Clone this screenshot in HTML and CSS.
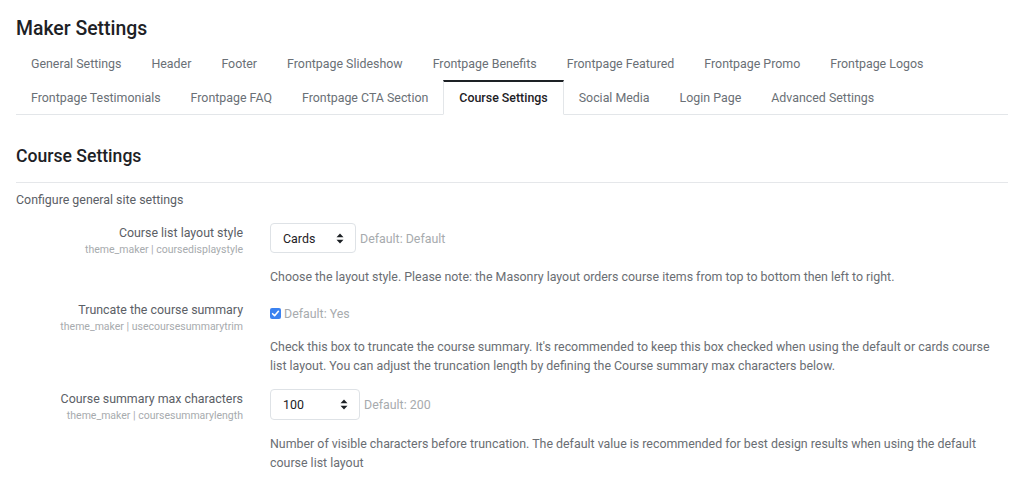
FILE: index.html
```html
<!DOCTYPE html>
<html lang="en">
<head>
<meta charset="utf-8">
<title>Maker Settings</title>
<link rel="stylesheet" href="styles.css">
</head>
<body>
<div class="page">
  <h2 class="page-title">Maker Settings</h2>
  <nav class="tabs">
    <a class="tab">General Settings</a>
    <a class="tab">Header</a>
    <a class="tab">Footer</a>
    <a class="tab">Frontpage Slideshow</a>
    <a class="tab">Frontpage Benefits</a>
    <a class="tab">Frontpage Featured</a>
    <a class="tab">Frontpage Promo</a>
    <a class="tab">Frontpage Logos</a>
    <a class="tab">Frontpage Testimonials</a>
    <a class="tab">Frontpage FAQ</a>
    <a class="tab">Frontpage CTA Section</a>
    <a class="tab active">Course Settings</a>
    <a class="tab">Social Media</a>
    <a class="tab">Login Page</a>
    <a class="tab">Advanced Settings</a>
  </nav>

  <h3 class="section-title">Course Settings</h3>
  <p class="intro">Configure general site settings</p>

  <div class="setting">
    <div class="label">
      <div class="label-name">Course list layout style</div>
      <div class="label-key">theme_maker | coursedisplaystyle</div>
    </div>
    <div class="control">
      <div class="control-line">
        <div class="select w86"><span>Cards</span>
          <svg class="caret" width="8" height="11" viewBox="0 0 8 11"><path d="M4 0.5 L7.5 4.2 H0.5 Z M4 10.5 L7.5 6.8 H0.5 Z" fill="#1d2125"/></svg>
        </div>
        <span class="default">Default: Default</span>
      </div>
      <p class="desc">Choose the layout style. Please note: the Masonry layout orders course items from top to bottom then left to right.</p>
    </div>
  </div>

  <div class="setting">
    <div class="label">
      <div class="label-name">Truncate the course summary</div>
      <div class="label-key">theme_maker | usecoursesummarytrim</div>
    </div>
    <div class="control">
      <div class="control-line check-line">
        <span class="checkbox"><svg width="11" height="11" viewBox="0 0 11 11"><rect x="0" y="0" width="11" height="11" rx="2" fill="#3b82f0"/><path d="M2.6 5.7 L4.6 7.7 L8.4 3.3" stroke="#fff" stroke-width="1.6" fill="none" stroke-linecap="round" stroke-linejoin="round"/></svg></span>
        <span class="default">Default: Yes</span>
      </div>
      <p class="desc">Check this box to truncate the course summary. It's recommended to keep this box checked when using the default or cards course list layout. You can adjust the truncation length by defining the Course summary max characters below.</p>
    </div>
  </div>

  <div class="setting">
    <div class="label">
      <div class="label-name">Course summary max characters</div>
      <div class="label-key">theme_maker | coursesummarylength</div>
    </div>
    <div class="control">
      <div class="control-line">
        <div class="select w90"><span>100</span>
          <svg class="caret" width="8" height="11" viewBox="0 0 8 11"><path d="M4 0.5 L7.5 4.2 H0.5 Z M4 10.5 L7.5 6.8 H0.5 Z" fill="#1d2125"/></svg>
        </div>
        <span class="default">Default: 200</span>
      </div>
      <p class="desc">Number of visible characters before truncation. The default value is recommended for best design results when using the default course list layout</p>
    </div>
  </div>
</div>
</body>
</html>
```

FILE: styles.css
```css
* { box-sizing: border-box; }
html, body { margin: 0; padding: 0; background: #fff; }
body {
  font-family: Roboto, "Liberation Sans", Arial, sans-serif;
  font-size: 12.4px;
  color: #1d2125;
}
.page {
  padding: 17px 16px 0 16px;
}
.page-title {
  margin: 0;
  font-size: 19.4px;
  line-height: 24px;
  font-weight: 500;
  color: #1d2125;
}
.tabs {
  margin-top: 5px;
  display: flex;
  flex-wrap: wrap;
  border-bottom: 1px solid #e3e6e9;
}
.tab {
  display: block;
  padding: 0 14px;
  height: 35px;
  line-height: 32px;
  color: #6a7076;
  font-size: 12.4px;
  border: 1px solid transparent;
  border-top-width: 2px;
  margin-bottom: -1px;
}
.tab.active {
  color: #1d2125;
  font-weight: 500;
  background: #fff;
  border-color: #1d2125 #e3e6e9 #fff #e3e6e9;
  padding: 0 15px;
}
.section-title {
  margin: 30px 0 0 0;
  font-size: 17.6px;
  line-height: 22px;
  font-weight: 500;
  color: #1d2125;
  padding-bottom: 15px;
  border-bottom: 1px solid #e5e7ea;
}
.intro {
  margin: 7px 0 14px 0;
  line-height: 19px;
  color: #5b6066;
}
.setting {
  display: grid;
  grid-template-columns: 227px 1fr;
  column-gap: 27px;
  margin-bottom: 13px;
}
.label {
  text-align: right;
}
.label-name {
  line-height: 19px;
  color: #5b6066;
}
.label-key {
  font-size: 10.5px;
  line-height: 15px;
  color: #a7abae;
}
.control-line {
  display: flex;
  align-items: center;
  gap: 4px;
}
.check-line {
  padding-top: 4px;
  gap: 3px;
}
.select {
  height: 30px;
  border: 1px solid #dee2e6;
  border-radius: 4px;
  display: flex;
  align-items: center;
  justify-content: space-between;
  padding: 0 11px 0 12px;
  color: #1d2125;
  font-size: 12.4px;
}
.select.w86 { width: 86px; }
.select.w90 { width: 90px; height: 31px; }
.caret { display: block; }
.default {
  color: #a7abae;
  line-height: 19px;
}
.checkbox {
  display: inline-flex;
  width: 11px;
  height: 11px;
}
.checkbox svg { display: block; }
.desc {
  margin: 14px 0 0 0;
  line-height: 19.5px;
  color: #6a6e73;
}
```
